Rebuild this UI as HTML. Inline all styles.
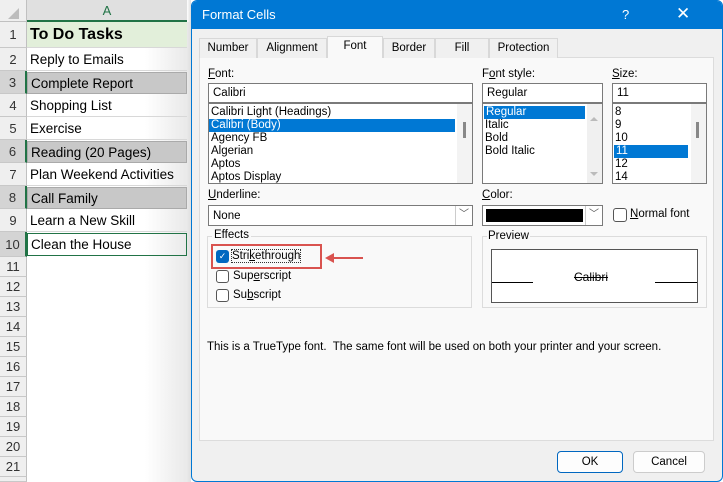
<!DOCTYPE html>
<html style="overflow:hidden;width:723px;height:482px"><head><style>
*{box-sizing:border-box;margin:0;padding:0}
body{width:723px;height:482px;overflow:hidden;background:#fff;font-family:"Liberation Sans",sans-serif;position:relative;font-size:12px;color:#000}
.a{position:absolute}
.rh{position:absolute;left:0;width:27px;background:#efefef;border-bottom:1px solid #c8c8c8;border-right:1px solid #c0c0c0;text-align:center;color:#333;font-size:13px}
.cell{position:absolute;left:27px;width:160px;border-bottom:1px solid #d8d8d8;font-size:13.5px;padding-left:3px;color:#000}
.g{background:#c8c8c8;border:1px solid #aaa}
.lbl{position:absolute;font-size:11.5px;color:#000}
.box{position:absolute;background:#fff;border:1px solid #7a7a7a}
.it{height:13px;line-height:13px;padding-left:2px;font-size:11.5px;white-space:nowrap}
.sel{background:#0078d4;color:#fff}
.cb{position:absolute;width:13px;height:13px;border:1px solid #555;border-radius:3px;background:#fff}
.tab{position:absolute;top:38px;height:20px;border:1px solid #d8d8d8;border-bottom:none;background:#f0f0f0;font-size:11.5px;text-align:center;line-height:19px}
</style></head><body>
<div class="a" style="left:0;top:0;width:27px;height:22px;background:#efefef;border-right:1px solid #c0c0c0;border-bottom:1px solid #c0c0c0"></div>
<div class="a" style="left:8px;top:8px;width:0;height:0;border-left:11px solid transparent;border-bottom:11px solid #bdbdbd"></div>
<div class="a" style="left:27px;top:0;width:160px;height:22px;background:#e0e0e0;border-bottom:2px solid #217346;text-align:center;line-height:22px;color:#217346;font-size:13px">A</div>
<div class="a" style="left:187px;top:0;width:4px;height:482px;background:linear-gradient(90deg,#fff,#ddd)"></div>
<div class="a" style="left:145px;top:22px;width:46px;height:460px;background:linear-gradient(90deg,rgba(255,255,255,0),rgba(225,225,225,.8))"></div>

<div class="rh" style="top:22px;height:26px;line-height:26px">1</div>
<div class="cell" style="top:22px;height:26px;line-height:26px;background:#e2efda;font-weight:bold;font-size:16px">To Do Tasks</div>
<div class="rh" style="top:48px;height:23px;line-height:23px">2</div><div class="cell" style="top:48px;height:23px;line-height:23px">Reply to Emails</div>
<div class="rh" style="top:71px;height:23px;line-height:23px;background:#d4d4d4;border-right:2px solid #217346">3</div><div class="cell g" style="top:72px;height:22px;line-height:21px">Complete Report</div>
<div class="rh" style="top:94px;height:23px;line-height:23px">4</div><div class="cell" style="top:94px;height:23px;line-height:23px">Shopping List</div>
<div class="rh" style="top:117px;height:23px;line-height:23px">5</div><div class="cell" style="top:117px;height:23px;line-height:23px">Exercise</div>
<div class="rh" style="top:140px;height:23px;line-height:23px;background:#d4d4d4;border-right:2px solid #217346">6</div><div class="cell g" style="top:141px;height:22px;line-height:21px">Reading (20 Pages)</div>
<div class="rh" style="top:163px;height:23px;line-height:23px">7</div><div class="cell" style="top:163px;height:23px;line-height:23px">Plan Weekend Activities</div>
<div class="rh" style="top:186px;height:23px;line-height:23px;background:#d4d4d4;border-right:2px solid #217346">8</div><div class="cell g" style="top:187px;height:22px;line-height:21px">Call Family</div>
<div class="rh" style="top:209px;height:23px;line-height:23px">9</div><div class="cell" style="top:209px;height:23px;line-height:23px">Learn a New Skill</div>
<div class="rh" style="top:232px;height:25px;line-height:25px;background:#d4d4d4;border-right:2px solid #217346">10</div><div class="cell" style="top:233px;height:23px;line-height:21px;border:1px solid #217346">Clean the House</div>
<div class="rh" style="top:257px;height:20px;line-height:20px">11</div>
<div class="rh" style="top:277px;height:20px;line-height:20px">12</div>
<div class="rh" style="top:297px;height:20px;line-height:20px">13</div>
<div class="rh" style="top:317px;height:20px;line-height:20px">14</div>
<div class="rh" style="top:337px;height:20px;line-height:20px">15</div>
<div class="rh" style="top:357px;height:20px;line-height:20px">16</div>
<div class="rh" style="top:377px;height:20px;line-height:20px">17</div>
<div class="rh" style="top:397px;height:20px;line-height:20px">18</div>
<div class="rh" style="top:417px;height:20px;line-height:20px">19</div>
<div class="rh" style="top:437px;height:20px;line-height:20px">20</div>
<div class="rh" style="top:457px;height:20px;line-height:20px">21</div>
<div class="rh" style="top:477px;height:5px;line-height:20px;overflow:hidden">22</div>

<div class="a" style="left:191px;top:0;width:532px;height:482px;background:#f0f0f0;border:1px solid #0078d4;border-radius:6px;overflow:hidden">
 <div class="a" style="left:0;top:0;width:532px;height:28px;background:#0078d4;color:#fff;font-size:13px;line-height:28px;padding-left:10px">Format Cells</div>
 <div class="a" style="left:430px;top:6px;color:#fff;font-size:13px">?</div>
 <div class="a" style="left:484px;top:3px;color:#fff;font-size:17px">✕</div>
</div>
<div class="a" style="left:199px;top:57px;width:515px;height:384px;background:#f9f9f9;border:1px solid #dcdcdc"></div>
<div class="tab" style="left:199px;width:58px">Number</div>
<div class="tab" style="left:257px;width:70px">Alignment</div>
<div class="tab" style="left:327px;width:56px;top:36px;height:22px;background:#f9f9f9">Font</div>
<div class="tab" style="left:383px;width:52px">Border</div>
<div class="tab" style="left:435px;width:54px">Fill</div>
<div class="tab" style="left:489px;width:69px">Protection</div>

<div class="lbl" style="left:208px;top:68px"><u>F</u>ont:</div>
<div class="box" style="left:208px;top:83px;width:265px;height:20px;padding:3px 4px;font-size:11.5px">Calibri</div>
<div class="box" style="left:208px;top:103px;width:265px;height:81px;padding-top:2px">
 <div class="it">Calibri Light (Headings)</div><div class="it sel" style="width:246px">Calibri (Body)</div><div class="it">Agency FB</div><div class="it">Algerian</div><div class="it">Aptos</div><div class="it">Aptos Display</div>
 <div class="a" style="left:248px;top:0;width:15px;height:79px;background:#f3f3f3"></div>
 <div class="a" style="left:254px;top:18px;width:3px;height:16px;background:#888"></div>
</div>

<div class="lbl" style="left:482px;top:68px">F<u>o</u>nt style:</div>
<div class="box" style="left:482px;top:83px;width:121px;height:20px;padding:3px 4px;font-size:11.5px">Regular</div>
<div class="box" style="left:482px;top:103px;width:121px;height:81px;padding-top:2px">
 <div class="it sel" style="width:101px;margin-left:1px">Regular</div><div class="it">Italic</div><div class="it">Bold</div><div class="it">Bold Italic</div>
 <div class="a" style="left:104px;top:0;width:15px;height:79px;background:#f0f0f0"></div>
 <div class="a" style="left:107px;top:9px;border:4px solid transparent;border-bottom-color:#bbb"></div>
 <div class="a" style="left:107px;top:68px;border:4px solid transparent;border-top-color:#bbb"></div>
</div>

<div class="lbl" style="left:612px;top:68px"><u>S</u>ize:</div>
<div class="box" style="left:612px;top:83px;width:95px;height:20px;padding:3px 4px;font-size:11.5px">11</div>
<div class="box" style="left:612px;top:103px;width:95px;height:81px;padding-top:2px">
 <div class="it">8</div><div class="it">9</div><div class="it">10</div><div class="it sel" style="width:74px;margin-left:1px">11</div><div class="it">12</div><div class="it">14</div>
 <div class="a" style="left:78px;top:0;width:15px;height:79px;background:#f3f3f3"></div>
 <div class="a" style="left:83px;top:18px;width:3px;height:16px;background:#888"></div>
</div>

<div class="lbl" style="left:208px;top:189px"><u>U</u>nderline:</div>
<div class="box" style="left:208px;top:205px;width:265px;height:21px;padding:4px 4px;font-size:11.5px">None
 <div class="a" style="left:246px;top:0;width:17px;height:19px;border-left:1px solid #ccc;text-align:center;color:#555;font-size:10px;line-height:18px">﹀</div></div>
<div class="lbl" style="left:482px;top:189px"><u>C</u>olor:</div>
<div class="box" style="left:482px;top:205px;width:121px;height:21px">
 <div class="a" style="left:3px;top:3px;width:97px;height:13px;background:#000"></div>
 <div class="a" style="left:102px;top:0;width:17px;height:19px;border-left:1px solid #ccc;text-align:center;color:#555;font-size:10px;line-height:18px">﹀</div></div>
<div class="cb" style="left:613px;top:208px;width:14px;height:14px"></div>
<div class="lbl" style="left:630px;top:208px"><u>N</u>ormal font</div>

<div class="a" style="left:207px;top:236px;width:265px;height:72px;border:1px solid #dcdcdc"></div>
<div class="lbl" style="left:212px;top:229px;background:#f9f9f9;padding:0 2px">Effects</div>
<div class="a" style="left:211px;top:244px;width:111px;height:25px;border:2px solid #d9534f"></div>
<div class="a" style="left:216px;top:250px;width:13px;height:13px;background:#0067c0;border-radius:3px;color:#fff;font-size:9px;text-align:center;line-height:13px">✓</div>
<div class="lbl" style="left:232px;top:250px;outline:1px dotted #333">Stri<u>k</u>ethrough</div>
<div class="a" style="left:333px;top:257px;width:30px;height:2px;background:#d9534f"></div>
<div class="a" style="left:325px;top:253px;border:5px solid transparent;border-right:9px solid #d9534f;border-left:none"></div>
<div class="cb" style="left:216px;top:270px"></div>
<div class="lbl" style="left:233px;top:270px">Sup<u>e</u>rscript</div>
<div class="cb" style="left:216px;top:289px"></div>
<div class="lbl" style="left:233px;top:289px">Su<u>b</u>script</div>

<div class="a" style="left:482px;top:236px;width:225px;height:72px;border:1px solid #dcdcdc"></div>
<div class="lbl" style="left:487px;top:230px;background:#f9f9f9;padding:0 1px">Preview</div>
<div class="a" style="left:491px;top:249px;width:207px;height:54px;background:#fff;border:1px solid #555">
 <div class="a" style="left:0;top:32px;width:41px;height:1px;background:#000"></div>
 <div class="a" style="left:163px;top:32px;width:42px;height:1px;background:#000"></div>
 <div class="a" style="left:82px;top:20px;font-size:12px;text-decoration:line-through">Calibri</div>
</div>

<div class="lbl" style="left:207px;top:341px">This is a TrueType font.&nbsp; The same font will be used on both your printer and your screen.</div>

<div class="a" style="left:557px;top:451px;width:66px;height:22px;background:#fdfdfd;border:1px solid #0067c0;border-radius:4px;text-align:center;line-height:20px;font-size:11.5px">OK</div>
<div class="a" style="left:633px;top:451px;width:72px;height:22px;background:#fdfdfd;border:1px solid #ccc;border-radius:4px;text-align:center;line-height:20px;font-size:11.5px">Cancel</div>
</body></html>
